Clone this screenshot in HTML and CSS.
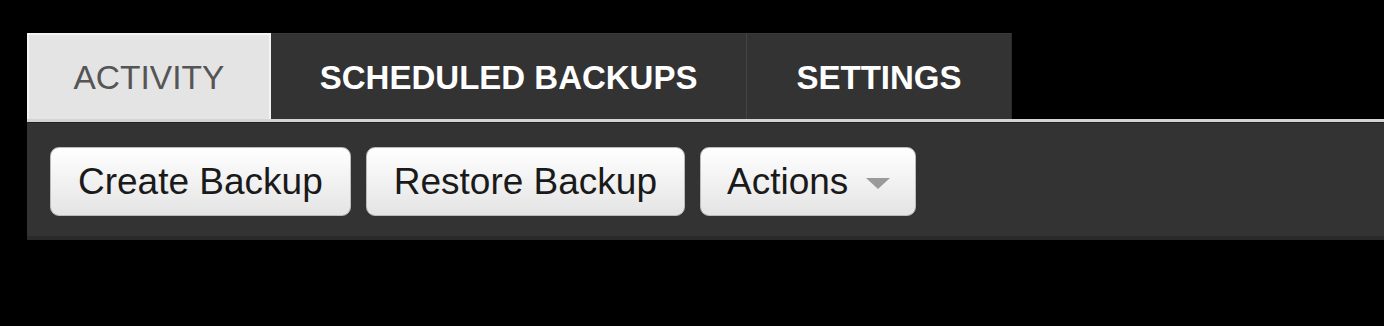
FILE: index.html
```html
<!DOCTYPE html>
<html>
<head>
<meta charset="utf-8">
<link rel="stylesheet" href="styles.css">
</head>
<body>
<div class="wrap">
  <div class="tabs">
    <div class="tab active">ACTIVITY</div>
    <div class="tab">SCHEDULED BACKUPS</div>
    <div class="tab">SETTINGS</div>
  </div>
  <div class="panel">
    <button class="btn">Create Backup</button>
    <button class="btn">Restore Backup</button>
    <button class="btn btn-menu">Actions <span class="caret"></span></button>
  </div>
</div>
</body>
</html>
```
FILE: styles.css
```css
html, body {
  margin: 0;
  padding: 0;
  background: #000;
}
body {
  font-family: Arial, "Liberation Sans", sans-serif;
}
.wrap {
  padding: 33px 0 0 27px;
}
.tabs {
  display: flex;
  height: 86px;
}
.tab {
  display: flex;
  align-items: center;
  justify-content: center;
  box-sizing: border-box;
  padding: 2px 49px 0;
  font-size: 33px;
  font-weight: bold;
  color: #fff;
  background: #333;
  border-top: 1px solid #3a3a3a;
  border-right: 1px solid #444;
}
.tab.active {
  background: #e4e4e4;
  color: #555;
  font-weight: normal;
  font-size: 33.5px;
  border: 2px solid #f4f4f4;
  border-bottom: none;
  padding: 2px 44.5px 0;
}
.tab:last-child {
  border-right: 1px solid #2a2a2a;
}
.panel {
  display: flex;
  gap: 15px;
  background: #333;
  border-top: 3px solid #d4d4d4;
  box-shadow: inset 0 1px 0 #222;
  border-bottom: 4px solid #2a2a2a;
  padding: 25px 23px 20px;
}
.btn {
  display: flex;
  align-items: center;
  height: 69px;
  box-sizing: border-box;
  padding: 0 27px;
  font-family: Arial, "Liberation Sans", sans-serif;
  font-size: 37px;
  color: #1a1a1a;
  background: linear-gradient(#ffffff, #e4e4e4);
  border: 1px solid #bbb;
  border-radius: 9px;
}
.btn-menu {
  padding: 0 25px 0 26px;
}
.caret {
  display: inline-block;
  width: 0;
  height: 0;
  margin-left: 18px;
  margin-top: 4px;
  border-left: 12px solid transparent;
  border-right: 12px solid transparent;
  border-top: 11px solid #9a9a9a;
}
```
